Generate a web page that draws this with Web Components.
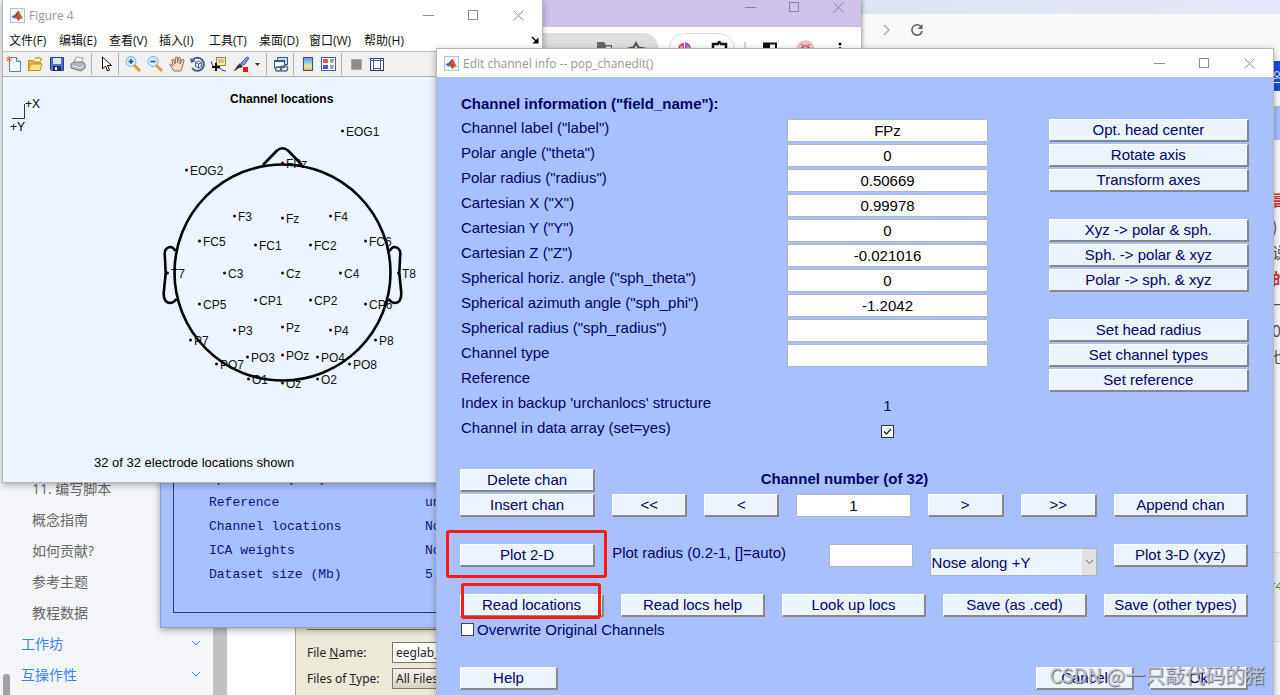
<!DOCTYPE html>
<html lang="zh">
<head>
<meta charset="utf-8">
<title>Edit channel info</title>
<style>
html, body { margin: 0; height: 100%; }
body { font-family: "Liberation Sans", "Noto Sans CJK SC", sans-serif; overflow: hidden; background: #fff; }
</style>
</head>
<body>
<eeg-desktop></eeg-desktop>
<script>
function define(name, html, setup) {
  customElements.define(name, class extends HTMLElement {
    constructor() {
      super();
      const t = document.createElement('template');
      t.innerHTML = html;
      this.attachShadow({ mode: 'open' }).append(t.content.cloneNode(true));
    }
    connectedCallback() {
      if (setup && !this.ready) { this.ready = true; setup(this, this.shadowRoot); }
    }
  });
}

/* ---------- window frame ---------- */
define('win-controls', `
<style>
:host { display: flex; gap: var(--gap, 34px); color: #909090; }
button { all: unset; width: 11px; height: 11px; display: block; }
svg { display: block; }
path, rect { fill: none; stroke: currentColor; }
</style>
<button aria-label="Minimize"><svg width="11" height="11"><path d="M0 5.5h11"/></svg></button>
<button aria-label="Maximize"><svg width="11" height="11"><rect x=".5" y=".5" width="9" height="9"/></svg></button>
<button aria-label="Close"><svg width="11" height="11"><path d="M.5 .5l10 10M10.500 .5l-10 10"/></svg></button>`);

define('app-window', `
<style>
:host { display: flex; flex-direction: column; box-sizing: border-box; border: 1px solid #b4b6ba; background: #fff; box-shadow: 0 2px 7px rgba(0,0,0,.32); }
header { display: flex; align-items: center; height: 28px; padding: 0 18px 0 7px; flex: none; font: 12px "Open Sans", "Noto Sans", sans-serif; color: #999; }
header svg { margin-right: 4px; }
win-controls { margin-left: auto; }
</style>
<header>
<svg width="15" height="15" viewBox="0 0 15 15"><rect x=".5" y=".5" width="14" height="14" fill="#f3f6fa" stroke="#b9c3d0"/><path d="M1.500 8.500L5 6.500 7 9 4.500 10.500z" fill="#3b6ea8"/><path d="M5 6.500L8.500 2.500 7 9z" fill="#264d86"/><path d="M8.500 2.500C10 4 11 8.500 13.500 11 11.500 10 10.500 10.500 8.500 13 8 11 6.500 9.500 4.500 10.500 6.500 9 7.500 5 8.500 2.500z" fill="#d4582a"/><path d="M8.500 2.500C9 6 8.500 9 7 10l1.500 3z" fill="#8f2b16"/></svg>
<span id="t"></span><win-controls></win-controls></header>
<slot></slot>`, (el, r) => { r.getElementById('t').textContent = el.getAttribute('caption'); });

/* ---------- channel editor parts ---------- */
define('push-button', `
<style>
:host { display: block; position: relative; }
button { box-sizing: border-box; display: block; width: 100%; height: 23px; margin: 0; padding: 0; border: 1px solid #fff; border-right: 2px solid #88888c; border-bottom: 2px solid #88888c; border-radius: 0; background: #ecf4ff; color: #000066; font: var(--button-size, 15px)/20px "Liberation Sans", sans-serif; white-space: nowrap; }
</style><button><slot></slot></button>`);

define('channel-field', `
<style>
:host { display: grid; grid-template-columns: 327fr 200fr; height: 25px; align-items: center; color: #000066; font-size: 15px; line-height: 20px; }
label { padding: 0 0 5px 1px; white-space: nowrap; }
input { box-sizing: border-box; width: 100%; height: 23px; margin: 0; padding: 0; border: 1px solid #adb5c8; border-radius: 0; background: #fff; color: #000; text-align: center; font: 15px "Liberation Sans", sans-serif; }
output { text-align: center; }
input[type=checkbox] { appearance: none; justify-self: center; width: 13px; height: 13px; border-color: #333; }
.tick { display: grid; justify-items: center; align-items: center; padding-top: 2px; }
.tick > * { grid-area: 1 / 1; }
svg { pointer-events: none; z-index: 1; }
</style><label for="f"></label>`, (el, r) => {
  r.querySelector('label').textContent = el.getAttribute('label');
  const kind = el.getAttribute('kind') || 'text', v = el.getAttribute('value') || '';
  if (kind === 'none') return;
  const t = document.createElement('template');
  if (kind === 'output') t.innerHTML = '<output id="f">' + v + '</output>';
  else if (kind === 'check') t.innerHTML = '<span class="tick"><input id="f" type="checkbox" checked><svg width="11" height="11"><path d="M2 5.500l2.500 2.500L9 3" fill="none" stroke="#222" stroke-width="1.300"/></svg></span>';
  else t.innerHTML = '<input id="f" type="text" value="' + v + '">';
  r.append(t.content);
});

define('channel-editor', `
<style>
:host { display: block; padding: 16px 24px 0 23px; background: #a8c0ff; color: #000066; font-size: 15px; line-height: 20px; flex: 1; }
.top { display: grid; grid-template-columns: 527fr 61fr 200fr; }
.top .side { grid-column: 3; display: grid; grid-template-rows: repeat(11, 25px); align-items: center; padding-top: 25px; }
h2 { margin: 0; height: 25px; box-sizing: border-box; padding: 0 0 0 1px; font-size: 15px; line-height: 21px; white-space: nowrap; }
.row { display: grid; grid-template-rows: 25px; column-gap: 17px; height: 25px; align-items: center; margin-right: 1px; }
.nav { grid-template-columns: 135fr 75fr 75fr 114fr 76fr 76fr 134fr; }
.nav h2 { grid-column: 3 / 6; text-align: center; padding-right: 20px; }
.plot { grid-template-columns: 135fr 200fr 83fr 167fr 134fr; }
.five { grid-template-columns: repeat(5, 1fr); }
.end { display: flex; justify-content: flex-start; column-gap: 16px; }
.end push-button { width: 98px; }
.end .c { margin-left: auto; }
.gap { height: 25px; }
label { white-space: nowrap; padding-bottom: 5px; }
input { box-sizing: border-box; width: 100%; height: 23px; margin: 0; padding: 0; border: 1px solid #adb5c8; border-radius: 0; background: #fff; text-align: center; font: 15px "Liberation Sans", sans-serif; }
input[type=checkbox] { appearance: none; width: 13px; height: 13px; border-color: #444; margin: 0 3px 0 1px; }
.over { display: flex; align-items: center; height: 23px; }
.over label { padding: 0; }
.pick { position: relative; align-self: start; margin-top: 5px; }
select { appearance: none; box-sizing: border-box; display: block; width: 100%; height: 28px; margin: 0; padding: 0 16px 0 1px; border: 1px solid #b0b4bc; border-radius: 0; background: linear-gradient(#e1e1e1, #e1e1e1) right / 14px 100% no-repeat #ecf4ff; color: #000066; font: 15px "Liberation Sans", sans-serif; }
.pick svg { position: absolute; right: 3px; top: 11px; pointer-events: none; }
.mark { position: relative; }
.mark::after { content: ""; position: absolute; box-sizing: border-box; border: 3px solid #ff1a0e; border-radius: 3px; pointer-events: none; }
.m1::after { inset: -14px -12px -11px -14px; }
.m2::after { inset: -11px 3px -2px 1px; }
</style>
<div class="top">
<form onsubmit="return false">
<h2>Channel information ("field_name"):</h2>
<channel-field label='Channel label ("label")' value="FPz"></channel-field>
<channel-field label='Polar angle ("theta")' value="0"></channel-field>
<channel-field label='Polar radius ("radius")' value="0.50669"></channel-field>
<channel-field label='Cartesian X ("X")' value="0.99978"></channel-field>
<channel-field label='Cartesian Y ("Y")' value="0"></channel-field>
<channel-field label='Cartesian Z ("Z")' value="-0.021016"></channel-field>
<channel-field label='Spherical horiz. angle ("sph_theta")' value="0"></channel-field>
<channel-field label='Spherical azimuth angle ("sph_phi")' value="-1.2042"></channel-field>
<channel-field label='Spherical radius ("sph_radius")'></channel-field>
<channel-field label="Channel type"></channel-field>
<channel-field label="Reference" kind="none"></channel-field>
<channel-field label="Index in backup 'urchanlocs' structure" kind="output" value="1"></channel-field>
<channel-field label="Channel in data array (set=yes)" kind="check"></channel-field>
</form>
<div class="side">
<push-button>Opt. head center</push-button><push-button>Rotate axis</push-button><push-button>Transform axes</push-button><i></i>
<push-button>Xyz -&gt; polar &amp; sph.</push-button><push-button>Sph. -&gt; polar &amp; xyz</push-button><push-button>Polar -&gt; sph. &amp; xyz</push-button><i></i>
<push-button>Set head radius</push-button><push-button>Set channel types</push-button><push-button>Set reference</push-button>
</div>
</div>
<div class="gap"></div>
<div class="row nav"><push-button>Delete chan</push-button><h2>Channel number (of 32)</h2></div>
<div class="row nav"><push-button>Insert chan</push-button><push-button>&lt;&lt;</push-button><push-button>&lt;</push-button><input type="text" aria-label="Channel number" value="1"><push-button>&gt;</push-button><push-button>&gt;&gt;</push-button><push-button>Append chan</push-button></div>
<div class="gap"></div>
<div class="row plot"><push-button class="mark m1">Plot 2-D</push-button><label for="rad">Plot radius (0.2-1, []=auto)</label><input id="rad" type="text"><span class="pick"><select aria-label="Nose direction"><option>Nose along +Y</option></select><svg width="9" height="6"><path d="M1 1l3.500 3.500L8 1" fill="none" stroke="#666"/></svg></span><push-button>Plot 3-D (xyz)</push-button></div>
<div class="gap"></div>
<div class="row five"><push-button class="mark m2">Read locations</push-button><push-button>Read locs help</push-button><push-button>Look up locs</push-button><push-button>Save (as .ced)</push-button><push-button>Save (other types)</push-button></div>
<div class="over"><input id="ow" type="checkbox"><label for="ow">Overwrite Original Channels</label></div>
<div class="gap"></div>
<div class="row end"><push-button>Help</push-button><push-button class="c">Cancel</push-button><push-button>Ok</push-button></div>`);

/* ---------- figure window parts ---------- */
define('figure-menu', `
<style>
:host { display: flex; align-items: center; height: 22px; padding: 0 6px; gap: 12px; font: 12px "Open Sans", "Noto Sans CJK SC", sans-serif; flex: none; }
a { color: #111; text-decoration: none; white-space: nowrap; width: 38px; }
a:nth-of-type(7) { width: 43px; }
svg { margin: 0 -3px 0 auto; }
</style>
<a href="#f">文件(F)</a><a href="#e">编辑(E)</a><a href="#v">查看(V)</a><a href="#i">插入(I)</a><a href="#t">工具(T)</a><a href="#d">桌面(D)</a><a href="#w">窗口(W)</a><a href="#h">帮助(H)</a>
<svg width="8" height="8"><path d="M1 1l4.500 4.500" stroke="#000" stroke-width="1.500"/><path d="M7.500 1.500V7.500H1.500z" fill="#000"/></svg>`);

define('figure-tools', `
<style>
:host { display: flex; align-items: center; box-sizing: border-box; height: 26px; padding: 0 3px; background: #f0f0f0; border-top: 1px solid #c0c0c0; border-bottom: 1px solid #b0b0b0; flex: none; }
button { all: unset; width: 16px; height: 16px; margin-right: 5px; display: block; }
svg { display: block; }
i { width: 1px; height: 22px; background: #b0b0b0; margin: 0 6px 0 -1px; }
.w { margin-right: 6px; }
</style>
<button aria-label="New"><svg width="16" height="16"><path d="M3.500 1.500h7l4 4v10h-11z" fill="#f2f8ff" stroke="#5b84ba"/><path d="M10.500 1.500v4h4" fill="#cfe0f5" stroke="#5b84ba"/><path d="M3 0v6M0 3h6M1 1l4 4M5 1L1 5" stroke="#e8743b"/></svg></button>
<button aria-label="Open" class="w"><svg width="16" height="16"><path d="M1.500 14V4.500h5l1 1.500h6V14z" fill="#e8b93c" stroke="#b98a1a"/><path d="M1.500 14.500L4 8h11l-2 6.500z" fill="#ffe48a" stroke="#c2921f"/><path d="M8 3q3-3 6 0v2" fill="none" stroke="#d8972b" stroke-width="1.500"/></svg></button>
<button aria-label="Save"><svg width="16" height="16"><path d="M1.500 1.500h13v13h-12l-1-1z" fill="#5a6cd0" stroke="#2b3a8e"/><rect x="4" y="2" width="8" height="6" fill="#dbe6fa"/><rect x="4" y="10" width="8" height="5" fill="#1f2c66"/><rect x="6" y="11" width="2" height="3" fill="#fff"/></svg></button>
<button aria-label="Print" class="w"><svg width="16" height="16"><path d="M4 7l2-6 7 1-1 6z" fill="#fff" stroke="#999"/><path d="M1 8l3-2h9l2 2v4l-4 3-10-3z" fill="#b4b6bc" stroke="#707478"/><path d="M2 10l9 2 3-2" fill="none" stroke="#eee"/></svg></button>
<i></i>
<button aria-label="Select"><svg width="16" height="16"><path d="M4.500 1v12l3-3 2 5 2-1-2-4.500h4z" fill="#fff" stroke="#111"/></svg></button>
<i></i>
<button aria-label="Zoom in" class="w"><svg width="16" height="16"><path d="M9 9l6 6" stroke="#e09a3c" stroke-width="3"/><circle cx="6" cy="5.500" r="5" fill="#d4ecfa" stroke="#7fb0d6"/><path d="M3.500 5.500h5M6 3v5" stroke="#234b9a" stroke-width="1.500"/></svg></button>
<button aria-label="Zoom out" class="w"><svg width="16" height="16"><path d="M9 9l6 6" stroke="#e09a3c" stroke-width="3"/><circle cx="6" cy="5.500" r="5" fill="#d4ecfa" stroke="#7fb0d6"/><path d="M3.500 5.500h5" stroke="#234b9a" stroke-width="1.500"/></svg></button>
<button aria-label="Pan"><svg width="16" height="16"><path d="M5 15L1 9q0-2 3 1L3 4q1-2 2.500 1l.5 3L6.500 1.500q1.500-1.500 2 .5v5l1-5.500q2-1 2 1L11 8l2-4.500q2-.5 2 1L13 12l-1.500 3z" fill="#fbdcc0" stroke="#8a6a58"/></svg></button>
<button aria-label="Rotate"><svg width="16" height="16"><path d="M3 3.500A6.500 6.500 0 1 1 2 12" fill="none" stroke="#4b5f86" stroke-width="2"/><path d="M0 2l1 5 5-2z" fill="#4b5f86"/><path d="M5.500 6.500l3-1.500 3 1.500v4l-3 1.500-3-1.500zM5.500 6.500l3 1.500 3-1.500M8.500 8v4" fill="#dbe6f4" stroke="#4b5f86"/></svg></button>
<button aria-label="Data cursor" class="w"><svg width="16" height="16"><rect x="5.500" y="1.500" width="9" height="8" fill="#f6efa0" stroke="#8f8a40"/><path d="M7 4h6M7 6h6" stroke="#9a965a"/><path d="M0 5q2 7 5 7l4 0q1 3 6 3" fill="none" stroke="#3a3adf"/><path d="M5 7v8M1 11h8" stroke="#111" stroke-width="2"/></svg></button>
<button aria-label="Brush"><svg width="16" height="16"><path d="M8 7l6-6 2 1-5 7z" fill="#8696d8" stroke="#4858a0"/><path d="M7 7l3 3-2 2H6q-3 3-6 3 3-2 4-5z" fill="#393943"/><rect x="10" y="11" width="5" height="5" fill="#f01010"/></svg></button>
<button aria-label="Brush colours" style="width:8px"><svg width="8" height="16"><path d="M1 7h5l-2.500 3z" fill="#333"/></svg></button>
<i></i>
<button aria-label="Link"><svg width="16" height="16"><rect x="4.500" y="1.500" width="10" height="7" fill="#c6d6ee" stroke="#3e5a92"/><rect x="1.500" y="4.500" width="10" height="7" fill="#fff" stroke="#3e5a92"/><path d="M1 5h11" stroke="#3e5a92" stroke-width="2"/><rect x="2.500" y="11" width="6" height="4" rx="2" fill="none" stroke="#59698a" stroke-width="1.500"/><rect x="7.500" y="10" width="7" height="5" rx="2" fill="none" stroke="#59698a" stroke-width="1.500"/></svg></button>
<i></i>
<button aria-label="Colorbar"><svg width="16" height="16"><defs><linearGradient id="g" x2="0" y2="1"><stop stop-color="#8a7af0"/><stop offset=".4" stop-color="#76e0e8"/><stop offset=".7" stop-color="#f6ea80"/><stop offset="1" stop-color="#f0a060"/></linearGradient></defs><rect x="3.500" y="1.500" width="9" height="13" fill="url(#g)" stroke="#34508a"/></svg></button>
<button aria-label="Legend"><svg width="16" height="16"><rect x=".5" y="1.500" width="14" height="13" fill="#fff" stroke="#4a5f90"/><rect x="2" y="3" width="5" height="4" fill="#e05252"/><rect x="2" y="9" width="5" height="4" fill="#5252e0"/><path d="M9 4h4M9 6h3M9 10h4M9 12h3" stroke="#444"/></svg></button>
<i></i>
<button aria-label="Hide tools"><svg width="16" height="16"><rect x="3.500" y="3.500" width="10" height="10" fill="#8c8c8c" stroke="#aaa"/></svg></button>
<button aria-label="Show tools"><svg width="16" height="16"><rect x="1.500" y="2.500" width="13" height="12" fill="#fff" stroke="#2f4272"/><path d="M4.500 2v12M11.500 2v12M1 4.500h14M4 12.500h8" stroke="#4a6096"/></svg></button>`);

define('head-plot', `
<style>
:host { display: block; flex: 1; background: #ecf4ff; overflow: hidden; }
svg { display: block; font: 12px "Liberation Sans", sans-serif; }
.n { font-size: 13px; }
</style>
<svg width="538" height="405" viewBox="3 77 538 405">
<g fill="#111" id="e"></g>
<g fill="none" stroke="#000" stroke-width="2.600" stroke-linejoin="round">
<circle cx="282.500" cy="272.500" r="108"/>
<path d="M263 165L277 150.500Q282.500 146 288 150.500L302 165"/>
<path d="M175.500 251Q173 246.500 170 247Q165 248 164.700 253L165.700 273L163.700 293Q163.500 303 170.500 303Q174 302.500 176.500 299"/>
<path d="M389.500 251Q392 246.500 395 247Q400 248 400.300 253L399.300 273L401.300 293Q401.500 303 394.500 303Q391 302.500 388.500 299"/>
</g>
<path d="M12 118.500h12.500V104" fill="none" stroke="#333"/>
<text x="25" y="108">+X</text><text x="10" y="131">+Y</text>
<text x="230" y="103" font-weight="bold">Channel locations</text>
<text class="n" x="94" y="467">32 of 32 electrode locations shown</text>
</svg>`, (el, r) => {
  const pts = 'EOG1 342 131,FPz 282 163,EOG2 186 170,F3 234 216,Fz 282 218,F4 330 216,FC5 199 241,FC1 255 245,FC2 310 245,FC6 365 241,T7 167 273,C3 224 273,Cz 282 273,C4 340 273,T8 398 273,CP5 199 304,CP1 255 300,CP2 310 300,CP6 365 304,P3 234 330,Pz 282 327,P4 330 330,P7 190 340,P8 375 340,PO7 216 364,PO3 247 357,POz 282 355,PO4 317 357,PO8 349 364,O1 248 379,Oz 282 383,O2 317 379';
  r.getElementById('e').innerHTML = pts.split(',').map(p => {
    const [n, x, y] = p.split(' ');
    return `<circle cx="${x}.500" cy="${y}" r="1.500"/><text x="${+x + 4}" y="${+y + 5}">${n}</text>`;
  }).join('');
});

/* ---------- windows behind ---------- */
define('dataset-summary', `
<style>
:host { display: block; box-sizing: border-box; background: #a8c0ff; border: 1px solid #8d9cc8; border-top: 0; box-shadow: 0 2px 7px rgba(0,0,0,.35); padding: 0 12px 14px; }
div { border: solid #2c3c6c; border-width: 0 1px 1px; padding: 27px 0 25px 35px; }
table { border-collapse: collapse; font: 13px/24px "Liberation Mono", monospace; color: #101080; }
td { padding: 0; height: 24px; white-space: nowrap; }
td:first-child { width: 216px; }
</style>
<div><table>
<tr><td>Epoch end (sec)</td><td>0.0</td></tr><tr><td>Reference</td><td>unknown</td></tr><tr><td>Channel locations</td><td>No (labels only)</td></tr><tr><td>ICA weights</td><td>No</td></tr><tr><td>Dataset size (Mb)</td><td>5.9</td></tr>
</table></div>`);

define('doc-sidebar', `
<style>
:host { display: flex; flex-direction: column; box-sizing: border-box; padding: 473px 12px 0 32px; background: #f5f6fa; font: 14px/31px "Open Sans", "Noto Sans CJK SC", sans-serif; overflow: hidden; position: relative; }
a { color: #666; text-decoration: none; white-space: nowrap; height: 31px; }
a.s { display: flex; justify-content: space-between; align-items: center; color: #3b82f6; margin-left: -11px; }
u { position: absolute; left: 3px; bottom: 0; width: 7px; height: 21px; background: #a0a2a6; border-radius: 3px 3px 0 0; }
</style>
<a href="#1">11. 编写脚本</a><a href="#2">概念指南</a><a href="#3">如何贡献?</a><a href="#4">参考主题</a><a href="#5">教程数据</a>
<a class="s" href="#6">工作坊<svg width="10" height="7"><path d="M1 1l4 4 4-4" fill="none" stroke="#3b82f6"/></svg></a>
<a class="s" href="#7">互操作性<svg width="10" height="7"><path d="M1 1l4 4 4-4" fill="none" stroke="#3b82f6"/></svg></a><u></u>`);

define('file-picker', `
<style>
:host { display: block; box-sizing: border-box; border-left: 1px solid #aaa; background: #ece9d8; padding: 0 12px 0 11px; font: 12px "Noto Sans", sans-serif; color: #222; }
p { margin: 0 0 9px; border-bottom: 1px solid #777; height: 29px; }
div { display: grid; grid-template-columns: 85px 1fr; height: 26px; align-items: center; }
input, select { box-sizing: border-box; appearance: none; width: 100%; height: 21px; margin: 0; padding: 0 3px; border: 1px solid #777; border-radius: 0; background: #fff; font: inherit; color: #222; }
select { background: linear-gradient(#f4f2ea, #d8d5c6); }
</style>
<p></p>
<div><label for="n">File <u>N</u>ame:</label><input id="n" value="eeglab_chan32.locs"></div>
<div><label for="t">Files of <u>T</u>ype:</label><select id="t"><option>All Files</option></select></div>`);

define('purple-browser', `
<style>
:host { display: block; background: #fff; box-shadow: 1px 0 4px rgba(0,0,0,.4); }
header { display: flex; justify-content: flex-end; box-sizing: border-box; height: 27px; padding: 2px 17px 0 0; background: #cfc2e8; }
win-controls { color: #8c7fa0; --gap: 33px; }
svg { display: block; width: 100%; }
</style>
<header><win-controls></win-controls></header>
<svg height="30" viewBox="543 27 318 30" preserveAspectRatio="xMaxYMin slice">
<path d="M543 33h101q13 1 15 16v8H543z" fill="#dedede"/>
<path d="M669 57v-8q2-15 15-15.500h35q14 1 15.500 15.500v8" fill="none" stroke="#ddd"/>
<path d="M597 42h7l2 3h6v7h-15z" fill="#666"/><path d="M606 46.500h5v4h-5z" fill="#eee"/>
<path d="M628 48.500l5.500-1 2.500-4.500 2.500 4.500 5.500 1-4 4" fill="none" stroke="#555" stroke-width="2"/>
<path d="M678 50q0-7 6-7.500v9z" fill="#f0489a"/><path d="M685 42q6 1 6 8h-6z" fill="#9a52e8"/><path d="M680 47h3M687 46l2 2" stroke="#ffb050" stroke-width="1.500"/>
<path d="M713 52v-8h5q1-4 3 0h5v8" fill="none" stroke="#111" stroke-width="2.500"/>
<path d="M745 42v10" stroke="#cfc2e8" stroke-width="1.500"/>
<rect x="764" y="43.500" width="12" height="12" fill="#fff" stroke="#111" stroke-width="2"/><rect x="764" y="43" width="6" height="10" fill="#111"/>
<circle cx="805.500" cy="49" r="9" fill="#f4c0c0"/><path d="M801 44l2 2h5l2-2M801 48l3-1M807 47l3 1" stroke="#a04848" fill="none"/>
<circle cx="840" cy="44" r="1.500"/><circle cx="840" cy="48.500" r="1.500"/>
</svg>`);

define('right-browser', `
<style>
:host { display: flex; flex-direction: column; background: #fafafa; overflow: hidden; font: 16px/26px "Noto Sans CJK SC", sans-serif; color: #555; }
svg { display: block; }
.tabs { height: 14px; background: linear-gradient(90deg, #dbe4f3, #e3e6f8); flex: none; }
.bar { display: flex; align-items: center; height: 35px; box-sizing: border-box; padding: 0 0 3px 21px; gap: 19px; background: #f8f9fb; flex: none; }
.bar button { all: unset; display: block; height: 14px; }
.page { display: flex; flex-direction: column; align-self: flex-end; width: 8px; padding-top: 12px; flex: 1; }
.b { height: 30px; background: #1450e0; flex: none; }
.h { height: 34px; margin: 15px 0 47px; background: #a8c0ff; flex: none; }
.page span { display: block; height: 26px; flex: none; white-space: nowrap; }
.r { color: #d83030; font-weight: bold; }
.q { margin-top: 183px; height: 90px; box-sizing: border-box; padding-top: 20px; border: solid #ddd; border-width: 1px 0; background: #f4f4f4; color: #3c9a40; font: italic 13px/26px "Liberation Sans", sans-serif; flex: none; white-space: nowrap; }
</style>
<div class="tabs"></div>
<div class="bar"><button aria-label="Forward"><svg width="9" height="14"><path d="M2 2l5 5-5 5" fill="none" stroke="#aaa" stroke-width="1.300"/></svg></button><button aria-label="Reload"><svg width="14" height="14"><path d="M11 3.500A5.200 5.200 0 1 0 12.200 8" fill="none" stroke="#5f6368" stroke-width="1.600"/><path d="M12.500 1v5h-5z" fill="#5f6368"/></svg></button></div>
<div class="page"><div class="b"><svg width="8" height="30"><circle cx="5" cy="13" r="2.500" fill="none" stroke="#fff"/><path d="M1 20q0-3 4-3h3M0 21.500h8" stroke="#fff" fill="none"/></svg></div><div class="h"></div>
<span class="r">哥</span><span>)</span><span>说</span><span class="r">的</span><span>一</span><span>0。</span><span>也</span><div class="q">:4</div></div>`);

/* ---------- desktop ---------- */
define('eeg-desktop', `
<style>
:host { display: block; position: relative; height: 100vh; overflow: hidden; background: linear-gradient(90deg, #f5f6fa 213px, #c2c2c2 213px 227px, #fff 227px); }
:host > * { position: absolute; }
doc-sidebar, file-picker, right-browser, purple-browser, dataset-summary, app-window, .mark { position: absolute; }
doc-sidebar { left: 0; top: 0; bottom: 0; width: 213px; }
file-picker { left: 295px; top: 600px; bottom: 0; width: 240px; }
right-browser { left: 861px; right: 0; top: 0; bottom: 0; }
purple-browser { left: 543px; width: 318px; top: 0; }
dataset-summary { left: 160px; width: 500px; top: 440px; }
.fig { left: 2px; top: 0; width: 541px; height: 483px; border-top: 0; padding-top: 1px; }
.edit { left: 436px; right: 6px; top: 48px; bottom: -1px; }
.mark { right: 15px; bottom: 6px; font: 20px/29px "Noto Sans CJK SC", sans-serif; color: rgba(196,200,210,.9); text-shadow: 1px 1px 1px rgba(60,65,80,.8); white-space: nowrap; pointer-events: none; }
</style>
<doc-sidebar></doc-sidebar>
<file-picker></file-picker>
<right-browser></right-browser>
<purple-browser></purple-browser>
<dataset-summary></dataset-summary>
<app-window class="fig" caption="Figure 4"><figure-menu></figure-menu><figure-tools></figure-tools><head-plot></head-plot></app-window>
<app-window class="edit" caption="Edit channel info -- pop_chanedit()"><channel-editor></channel-editor></app-window>
<div class="mark">CSDN @一只敲代码的猪</div>`);
</script>
</body>
</html>
